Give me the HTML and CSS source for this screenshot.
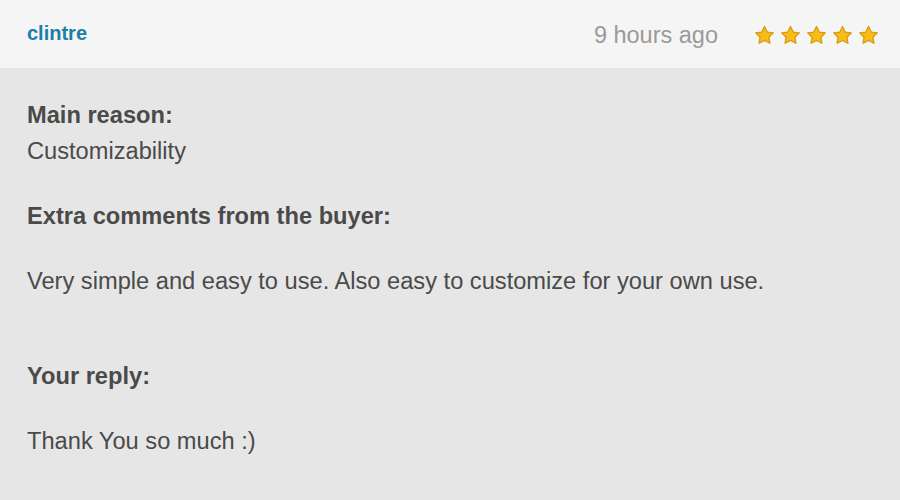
FILE: index.html
```html
<!DOCTYPE html>
<html>
<head>
<meta charset="utf-8">
<link rel="stylesheet" href="styles.css">
</head>
<body>
<div class="review">
  <div class="head">
    <a class="author">clintre</a>
    <div class="meta">
      <span class="time">9 hours ago</span>
      <div class="stars">
        <svg class="star" viewBox="0 0 20 20"><path d="M10 1.4l2.6 5.3 5.8.8-4.2 4.1 1 5.8L10 14.7l-5.2 2.7 1-5.8-4.2-4.1 5.8-.8z"/></svg>
        <svg class="star" viewBox="0 0 20 20"><path d="M10 1.4l2.6 5.3 5.8.8-4.2 4.1 1 5.8L10 14.7l-5.2 2.7 1-5.8-4.2-4.1 5.8-.8z"/></svg>
        <svg class="star" viewBox="0 0 20 20"><path d="M10 1.4l2.6 5.3 5.8.8-4.2 4.1 1 5.8L10 14.7l-5.2 2.7 1-5.8-4.2-4.1 5.8-.8z"/></svg>
        <svg class="star" viewBox="0 0 20 20"><path d="M10 1.4l2.6 5.3 5.8.8-4.2 4.1 1 5.8L10 14.7l-5.2 2.7 1-5.8-4.2-4.1 5.8-.8z"/></svg>
        <svg class="star" viewBox="0 0 20 20"><path d="M10 1.4l2.6 5.3 5.8.8-4.2 4.1 1 5.8L10 14.7l-5.2 2.7 1-5.8-4.2-4.1 5.8-.8z"/></svg>
      </div>
    </div>
  </div>
  <div class="content">
    <p class="label">Main reason:</p>
    <p class="value">Customizability</p>
    <p class="label gap">Extra comments from the buyer:</p>
    <p class="value gap">Very simple and easy to use. Also easy to customize for your own use.</p>
    <p class="label biggap">Your reply:</p>
    <p class="value gap">Thank You so much :)</p>
  </div>
</div>
</body>
</html>
```

FILE: styles.css
```css
html, body {
  margin: 0;
  padding: 0;
}
body {
  width: 900px;
  height: 500px;
  overflow: hidden;
  background: #e6e6e6;
  font-family: "Liberation Sans", Arial, sans-serif;
}
.review {
  display: flex;
  flex-direction: column;
}
.head {
  height: 68px;
  background: #f5f5f5;
  display: flex;
  align-items: center;
  justify-content: space-between;
  padding: 0 21px 0 27px;
  box-sizing: border-box;
}
.author {
  color: #1b7fa6;
  font-weight: bold;
  font-size: 20px;
  margin-top: -1px;
}
.meta {
  display: flex;
  align-items: center;
  gap: 36px;
  margin-top: 2px;
}
.time {
  color: #9a9a9a;
  font-size: 23.5px;
}
.stars {
  display: flex;
  gap: 5px;
}
.star {
  width: 21px;
  height: 21px;
  fill: #f8bb17;
  stroke: #d49b0c;
  stroke-width: 1.2;
  stroke-linejoin: round;
}
.content {
  padding: 29px 27px 0;
  color: #4a4a4a;
}
.content p {
  margin: 0;
  font-size: 23.65px;
  line-height: 36px;
}
.label {
  font-weight: bold;
}
.gap {
  margin-top: 29px !important;
}
.biggap {
  margin-top: 59px !important;
}
```
